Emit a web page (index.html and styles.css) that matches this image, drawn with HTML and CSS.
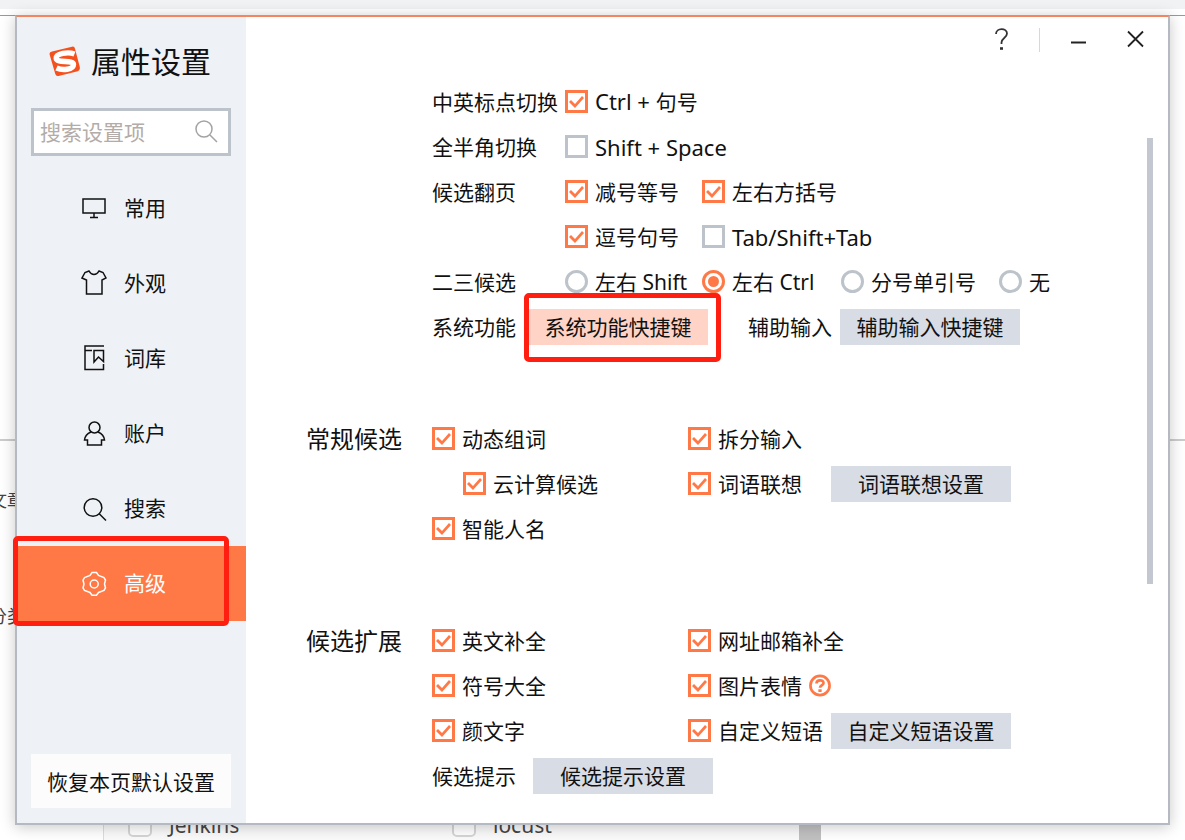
FILE: index.html
```html
<!DOCTYPE html>
<html lang="zh-CN">
<head>
    <meta charset="UTF-8">
    <meta name="viewport" content="width=device-width, initial-scale=1.0">
    <title>属性设置</title>
    <link rel="stylesheet" href="styles.css">
</head>
<body>
    <!-- Página de fondo -->
    <div class="page">
        <div class="page-top"></div>
        <div class="page-box"></div>
        <div class="page-labels">
            <span>文章</span>
            <span>分类</span>
        </div>
        <div class="page-tags">
            <label class="tag"><input type="checkbox">Jenkins</label>
            <label class="tag"><input type="checkbox">locust</label>
            <div class="page-scroll"></div>
        </div>
    </div>

    <div class="window">
        <aside class="sidebar">
            <h1 class="brand">
                <svg width="32" height="32" viewBox="0 0 32 32">
                    <path d="M3 5.500L23 .700Q25.500 .200 26 2.700L30.800 21Q31.300 24 28.800 25.200L9.500 30Q7 30.500 6.300 28L.600 8.500Q.200 6 3 5.500Z" fill="#f4511e"/>
                    <path d="M25.500 8C19 5.500 7 7.500 7.200 12.300C7.500 17.500 24.500 13.500 24.500 18.500C24.500 24 13 24.500 7.500 22" fill="none" stroke="#fff" stroke-width="5.400"/>
                </svg>
                属性设置
            </h1>

            <div class="search">
                <input type="text" placeholder="搜索设置项" aria-label="搜索设置项">
                <svg width="24" height="24" viewBox="0 0 24 24" fill="none" stroke="#a3a3a3" stroke-width="1.500">
                    <circle cx="9" cy="9" r="8"/>
                    <path d="M15 15L22 22"/>
                </svg>
            </div>

            <nav class="menu">
                <a href="#" class="menu-item">
                    <svg class="icon" viewBox="0 0 26 26">
                        <path d="M2 4H24V18H2ZM13 18V22M9 22.500H17"/>
                    </svg>
                    常用
                </a>
                <a href="#" class="menu-item">
                    <svg class="icon" viewBox="0 0 26 26">
                        <path d="M8 1Q10 4.500 13 4.500Q16 4.500 18 1L22 2.500L25 8L21 10V24H5.500V10L1 8L4 2.500Z"/>
                    </svg>
                    外观
                </a>
                <a href="#" class="menu-item">
                    <svg class="icon" viewBox="0 0 26 26">
                        <path d="M23 1H4V24.500H22.500V19M4 5.500H11M13 5.500H22.500V16.500L17.500 12L13 17Z"/>
                    </svg>
                    词库
                </a>
                <a href="#" class="menu-item">
                    <svg class="icon" viewBox="0 0 26 26">
                        <circle cx="13.500" cy="7.500" r="5.500"/>
                        <path d="M10 12Q4 14.500 3.500 20H6.500V25H20.500V20H23.500Q23 14.500 17 12"/>
                    </svg>
                    账户
                </a>
                <a href="#" class="menu-item">
                    <svg class="icon" viewBox="0 0 26 26">
                        <circle cx="12" cy="12.500" r="8.800"/>
                        <path d="M18 18.500L25 25.500"/>
                    </svg>
                    搜索
                </a>
                <a href="#" class="menu-item active">
                    <svg class="icon" viewBox="0 0 26 26">
                        <path d="M11 2.500H15.500L17.500 5.500L23 7.500L24.500 10L23.500 14L24.500 18L23 20.500L17.500 22.500L15.500 25.200H11L9 22.500L3.500 20.500L2 18L3 14L2 10L3.500 7.500L9 5.500Z"/>
                        <circle cx="13.200" cy="14" r="4"/>
                    </svg>
                    高级
                    <span class="mark mark-menu"></span>
                </a>
            </nav>

            <button class="restore">恢复本页默认设置</button>
        </aside>

        <main class="main">
            <div class="controls">
                <button aria-label="帮助">
                    <svg width="30" height="30" viewBox="0 0 30 30" fill="none" stroke="#333" stroke-width="1.800">
                        <path d="M10 9C10 2.500 21 2.500 21 8.500C21 13 15.500 13 15.500 17.500V19"/>
                        <path d="M14 23.500H17" stroke-width="2.600"/>
                    </svg>
                </button>
                <span class="divider"></span>
                <button class="minimize" aria-label="最小化">
                    <svg width="30" height="30" viewBox="0 0 30 30" fill="none" stroke="#222" stroke-width="2">
                        <path d="M8 17.500H23"/>
                    </svg>
                </button>
                <button aria-label="关闭">
                    <svg width="30" height="30" viewBox="0 0 30 30" fill="none" stroke="#222" stroke-width="1.800">
                        <path d="M8 6.500L23 21.500M23 6.500L8 21.500"/>
                    </svg>
                </button>
            </div>

            <div class="content">
                <div class="groups">
                    <!-- Teclas rápidas -->
                    <section class="group">
                        <div class="rows">
                            <div class="row">
                                <span class="name">中英标点切换</span>
                                <label class="option"><input type="checkbox" checked><span><span class="en">Ctrl + </span>句号</span></label>
                            </div>
                            <div class="row">
                                <span class="name">全半角切换</span>
                                <label class="option"><input type="checkbox"><span class="en">Shift + Space</span></label>
                            </div>
                            <div class="row">
                                <span class="name">候选翻页</span>
                                <div class="options">
                                    <label class="option"><input type="checkbox" checked>减号等号</label>
                                    <label class="option"><input type="checkbox" checked>左右方括号</label>
                                </div>
                            </div>
                            <div class="row">
                                <span class="name"></span>
                                <div class="options">
                                    <label class="option"><input type="checkbox" checked>逗号句号</label>
                                    <label class="option"><input type="checkbox"><span class="en">Tab/Shift+Tab</span></label>
                                </div>
                            </div>
                            <div class="row">
                                <span class="name">二三候选</span>
                                <div class="options">
                                    <label class="option"><input type="radio" name="second">左右 Shift</label>
                                    <label class="option"><input type="radio" name="second" checked>左右 Ctrl</label>
                                    <label class="option"><input type="radio" name="second">分号单引号</label>
                                    <label class="option"><input type="radio" name="second">无</label>
                                </div>
                            </div>
                            <div class="row shortcuts">
                                <span>系统功能</span>
                                <span class="marked">
                                    <button class="btn btn-hot">系统功能快捷键</button>
                                    <span class="mark mark-btn"></span>
                                </span>
                                <span>辅助输入</span>
                                <button class="btn">辅助输入快捷键</button>
                            </div>
                        </div>
                    </section>

                    <section class="group">
                        <h2>常规候选</h2>
                        <div class="rows">
                            <div class="row pair">
                                <label class="option"><input type="checkbox" checked>动态组词</label>
                                <label class="option"><input type="checkbox" checked>拆分输入</label>
                            </div>
                            <div class="row pair">
                                <label class="option sub"><input type="checkbox" checked>云计算候选</label>
                                <label class="option"><input type="checkbox" checked>词语联想</label>
                                <button class="btn">词语联想设置</button>
                            </div>
                            <div class="row pair">
                                <label class="option"><input type="checkbox" checked>智能人名</label>
                            </div>
                        </div>
                    </section>

                    <section class="group">
                        <h2>候选扩展</h2>
                        <div class="rows">
                            <div class="row pair">
                                <label class="option"><input type="checkbox" checked>英文补全</label>
                                <label class="option"><input type="checkbox" checked>网址邮箱补全</label>
                            </div>
                            <div class="row pair">
                                <label class="option"><input type="checkbox" checked>符号大全</label>
                                <label class="option">
                                    <input type="checkbox" checked>图片表情
                                    <svg width="23" height="23" viewBox="0 0 23 23" fill="none" stroke="#ff7947" stroke-width="2.800">
                                        <circle cx="11.500" cy="11.500" r="10"/>
                                        <path d="M7.800 9.500C7.800 5 15.200 5 15.200 9C15.200 11.500 11.500 11 11.500 13.800M9.800 16.800H13.200"/>
                                    </svg>
                                </label>
                            </div>
                            <div class="row pair">
                                <label class="option"><input type="checkbox" checked>颜文字</label>
                                <label class="option"><input type="checkbox" checked>自定义短语</label>
                                <button class="btn">自定义短语设置</button>
                            </div>
                            <div class="row tips">
                                <span>候选提示</span>
                                <button class="btn">候选提示设置</button>
                            </div>
                        </div>
                    </section>
                </div>
                <div class="scrollbar"></div>
            </div>
        </main>
    </div>
</body>
</html>
```

FILE: styles.css
```css
* {
    box-sizing: border-box;
}
body {
    font-family: "Noto Sans", "Noto Sans CJK SC", sans-serif;
    font-size: 21px;
    line-height: 30px;
    color: #111;
    margin: 0;
    height: 100vh;
    position: relative;
    overflow: hidden;
}
button, input {
    font-family: inherit;
    font-size: inherit;
    color: inherit;
    margin: 0;
}
button {
    border: none;
    padding: 0;
    cursor: pointer;
}

/* fondo */
.page {
    height: 100%;
    display: flex;
    flex-direction: column;
    background: #fff;
    color: #444;
}
.page-top {
    height: 9px;
    background: #f1f2f4;
    margin-bottom: 6px;
    flex-shrink: 0;
}
.page-box {
    height: 426px;
    border-top: 1px solid #999;
    border-bottom: 2px solid #ccc;
    flex-shrink: 0;
}
.page-labels {
    display: flex;
    flex-direction: column;
    gap: 86px;
    margin: 44px 0 0 -11px;
    font-size: 18px;
}
.page-tags {
    display: grid;
    grid-template-columns: 324px 347px 22px;
    align-items: center;
    height: 30px;
    width: 718px;
    margin: auto 0 0 103px;
    padding-left: 24px;
    border-left: 1px solid #ddd;
    border-right: 1px solid #ddd;
    background: #fafafa;
}
.tag {
    display: flex;
    align-items: center;
    gap: 17px;
}
.tag input {
    appearance: none;
    width: 24px;
    height: 24px;
    border: 2px solid #d5d5d5;
    border-radius: 5px;
    background: #fff;
}
.page-scroll {
    height: 30px;
    background: #c1c1c1;
}

/* ventana */
.window {
    position: absolute;
    inset: 15px;
    display: flex;
    background: #fff;
    border: 2px solid #b4b9c2;
    border-top-color: #f58560;
    box-shadow: 0 2px 14px rgba(0, 0, 0, 0.22);
}
.sidebar {
    width: 229px;
    flex-shrink: 0;
    display: flex;
    flex-direction: column;
    background: #eef1f6;
}
.brand {
    display: flex;
    align-items: center;
    gap: 10px;
    height: 90px;
    margin: 0 0 1px;
    padding-left: 32px;
    font-size: 30px;
    font-weight: 400;
}
.search {
    display: flex;
    align-items: center;
    height: 48px;
    margin: 0 15px 15px 14px;
    padding: 0 9px 0 6px;
    border: 3px solid #bdc3ca;
    background: #fff;
}
.search input {
    flex: 1;
    min-width: 0;
    padding: 0;
    border: none;
    outline: none;
    background: none;
}
.search input::placeholder {
    color: #b3aca8;
}
.menu-item {
    position: relative;
    display: flex;
    align-items: center;
    gap: 17px;
    height: 75px;
    padding-left: 64px;
    padding-bottom: 2px;
    color: #111;
    text-decoration: none;
}
.menu-item.active {
    background: #ff7947;
    color: #fff;
}
.icon {
    width: 26px;
    height: 26px;
    fill: none;
    stroke: currentColor;
    stroke-width: 1.5;
}
.restore {
    height: 54px;
    margin: auto 15px 15px 14px;
    background: #fcfcfc;
}
.mark {
    position: absolute;
    border: 5px solid #ff1e10;
    border-radius: 5px;
    z-index: 1;
    pointer-events: none;
}
.mark-menu {
    inset: -10px 17px -5px -4px;
}
.mark-btn {
    inset: -16px -13px -17px -4px;
}

.main {
    flex: 1;
    display: flex;
    flex-direction: column;
    min-width: 0;
}
.controls {
    display: flex;
    justify-content: flex-end;
    align-items: flex-start;
    gap: 23px;
    height: 62px;
    padding: 8px 18px 0 0;
}
.controls button {
    height: 30px;
    background: none;
}
.controls svg {
    display: block;
}
.controls .minimize {
    margin-right: 4px;
}
.divider {
    width: 1px;
    height: 24px;
    margin-top: 3px;
    background: #d3d9e2;
}
.content {
    flex: 1;
    display: flex;
    padding: 0 15px 0 60px;
}
.groups {
    flex: 1;
    display: flex;
    flex-direction: column;
    gap: 67px;
}
.group {
    display: grid;
    grid-template-columns: 126px 1fr;
}
.group h2 {
    margin: 0;
    font-size: 24px;
    font-weight: 400;
    line-height: 45px;
}
.rows {
    grid-column: 2;
}
.row {
    display: flex;
    align-items: center;
    height: 45px;
    white-space: nowrap;
}
.name {
    width: 133px;
}
.options {
    display: grid;
    grid-template-columns: 137px 139px 158px auto;
}
.pair {
    display: grid;
    grid-template-columns: 256px 143px auto;
    justify-content: start;
}
.shortcuts {
    display: grid;
    grid-template-columns: 96px 220px 92px auto;
    justify-content: start;
}
.tips {
    gap: 17px;
}
.option {
    display: flex;
    align-items: center;
    gap: 7px;
}
.sub {
    padding-left: 31px;
}
.en {
    font-size: 22px;
    white-space: pre;
}
.option input {
    appearance: none;
    display: grid;
    place-content: center;
    flex-shrink: 0;
    width: 23px;
    height: 23px;
    border: 3px solid #bdc3cb;
    background: #fff;
}
.option input:checked {
    border-color: #ff7947;
}
.option input[type="checkbox"]:checked::before {
    content: "";
    width: 17px;
    height: 17px;
    background: #ff7947;
    clip-path: polygon(1px 9px, 3px 7px, 7px 11px, 14px 3px, 16px 5px, 7px 15px);
}
.option input[type="radio"] {
    border-radius: 50%;
}
.option input[type="radio"]:checked::before {
    content: "";
    width: 11px;
    height: 11px;
    border-radius: 50%;
    background: #ff7947;
}
.btn {
    width: 180px;
    height: 36px;
    padding-bottom: 2px;
    background: #d8dce4;
}
.btn-hot {
    background: #ffd4c6;
}
.marked {
    position: relative;
    display: flex;
    width: 180px;
}
.scrollbar {
    width: 6px;
    height: 60%;
    margin-top: 59px;
    background: #c3c7d0;
}
```
